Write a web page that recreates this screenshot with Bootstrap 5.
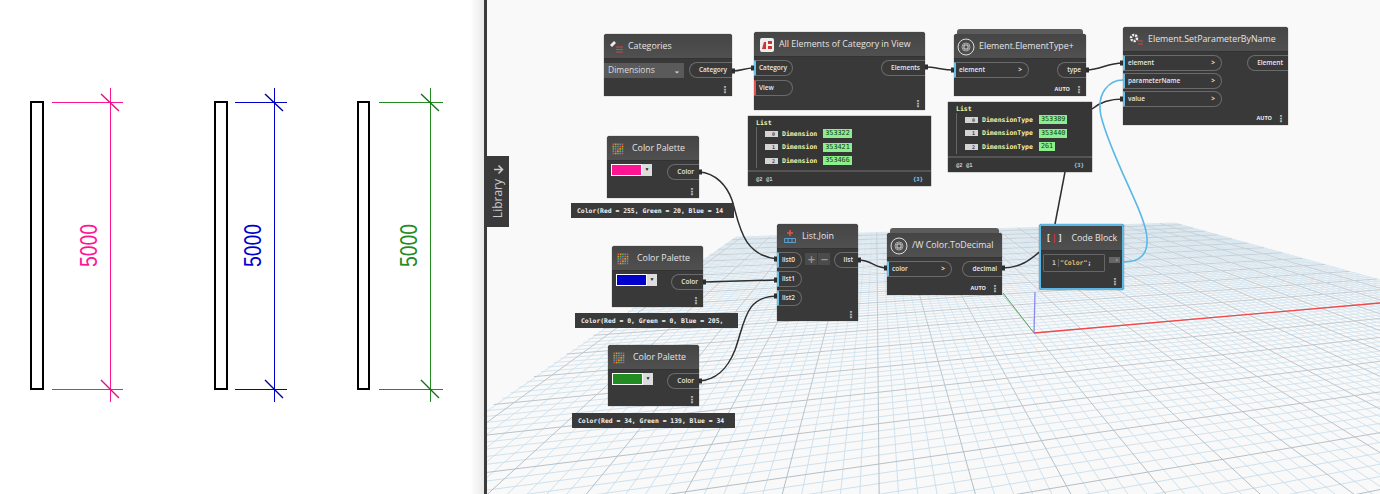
<!DOCTYPE html>
<html lang="en">
<head>
  <meta charset="UTF-8">
  <title>Dynamo graph - dimension colours</title>
  <link href="https://cdn.jsdelivr.net/npm/bootstrap@5.3.3/dist/css/bootstrap.min.css" rel="stylesheet" />
  <style>
    html, body { height: 494px; overflow: hidden; background: #fff; }
    .app-wrap { width: 1380px; height: 494px; }
    .revit-pane { width: 484px; background: linear-gradient(90deg, #fff 0, #fff 470px, #e9e9e9 484px); }
    .pane-split { width: 3px; background: #3b3b3b; }
    .graph-pane { width: 893px; background: #f9f9f9; overflow: hidden; }
    .layer-svg { position: absolute; left: 0; top: 0; width: 893px; height: 494px; }
    .dim-text { font-family: "Liberation Sans", sans-serif; font-size: 23px; }

    .lib-tab { position: absolute; left: 0; top: 156px; width: 22px; height: 71px; background: #3a3a3a; color: #c9c9c9; font: 12px "Open Sans", sans-serif; }
    .lib-label { writing-mode: vertical-rl; transform: rotate(180deg); line-height: 1; }

    .dyn-node { position: absolute; background: #393939; color: #e2e2e2; font-family: "Open Sans", sans-serif; border-radius: 3px 3px 0 0; box-shadow: 0 0 1px #222; }
    .dyn-head { height: 25px; background: linear-gradient(#454545, #505050); border-bottom: 1px solid #333; border-radius: 3px 3px 0 0; font-size: 8.85px; padding: 1px 0 0 5px; color: #e4e4e4; white-space: nowrap; }
    .head-tight { padding-left: 3px; }
    .dyn-body { padding-top: 3px; }
    .dyn-foot { position: absolute; right: 0; bottom: 0; height: 13px; padding-right: 3px; font-size: 5.5px; font-weight: 700; color: #eee; }
    .dots-v { font: 700 10px "DejaVu Sans", sans-serif; color: #bbb; width: 9px; text-align: center; line-height: 1; }
    .stacked::before { content: ""; position: absolute; left: 3px; right: 3px; top: -5px; height: 5px; background: #5c5c5c; border-radius: 3px 3px 0 0; }

    .port-in, .port-out { height: 16px; border: 1px solid #6b6b6b; font-size: 6.5px; font-weight: 600; color: #e8e8e8; white-space: nowrap; }
    .port-in { border-left: 2px solid #67bfe8; border-radius: 0 8px 8px 0; padding: 0 6px 0 3px; }
    .port-in.port-red { border-left-color: #e2544f; }
    .port-out { border-right: 0; border-radius: 8px 0 0 8px; padding: 0 5px 0 9px; }
    .chev { font-weight: 700; font-size: 6.5px; }
    .port-w-type { width: 75px; }
    .port-w-set { width: 99px; }
    .port-w-color { width: 65px; }
    .port-w-all { width: 39px; }
    .gap-set { gap: 2px; }
    .gap-join { gap: 3px; }
    .gap-tiny { gap: 1px; }
    .top-tiny { margin-top: 1px; }

    .cat-drop { width: 80px; height: 15px; margin-top: 1px; background: #5a5a5a; font-size: 8.5px; padding: 0 4px; color: #ddd; }
    .swatch { width: 31px; height: 12px; border: 1px solid #fff; }
    .swatch-pink { background: #ff1493; }
    .swatch-blue { background: #0000cd; }
    .swatch-green { background: #228b22; }
    .swatch-btn { width: 10px; height: 12px; background: #ddd; color: #222; font-size: 5px; }
    .plus-btn { width: 12px; height: 12px; background: #4b4b4b; color: #9a9a9a; font: 700 10px "DejaVu Sans", sans-serif; }

    .watch-box { position: absolute; background: #363636; color: #f2f2a8; font: 700 6.5px "DejaVu Sans Mono", monospace; box-shadow: 0 0 1px #222; }
    .watch-top { padding: 3px 0 0 8px; }
    .watch-tree { border-left: 1px solid #666; }
    .watch-row { height: 13.5px; }
    .watch-idx { width: 13px; height: 6px; background: #d4d4d4; color: #444; font-size: 5px; line-height: 6px; text-align: right; padding-right: 3px; }
    .watch-val { height: 9px; background: #8bf08b; color: #1c3a1c; line-height: 9px; margin-left: 6px; padding: 0 2px; font-weight: 400; font-size: 6.8px; }
    .watch-foot { height: 16px; border-top: 2px solid #555; color: #ccc; font-size: 5.5px; }
    .watch-count { color: #8ec9ee; }
    .tip-box { position: absolute; height: 15px; background: #3a3a3a; color: #f1f1f1; font: 700 6.4px "DejaVu Sans Mono", monospace; padding-left: 6px; white-space: nowrap; overflow: hidden; }

    .code-node { border: 2px solid #5ab8e6; border-radius: 3px; }
    .code-brack { font: 700 8px "DejaVu Sans Mono", monospace; letter-spacing: 1px; }
    .code-edit { width: 62px; height: 18px; border: 1px solid #666; font: 700 6.5px "DejaVu Sans Mono", monospace; margin: 3px 0 0 2px; border-radius: 1px; }
    .code-num { width: 15px; text-align: right; padding-right: 2px; border-right: 1px solid #666; color: #ccc; }
    .code-str { color: #e8b56c; padding-left: 1px; }
    .code-out { width: 11px; height: 6px; background: #666; color: #ddd; font-size: 5px; margin: 6px 1px 0 4px; line-height: 6px; text-align: right; padding-right: 2px; }

    #nodeCat { left: 117px; top: 34px; width: 128px; height: 62px; }
    #nodeAll { left: 267px; top: 32px; width: 171px; height: 78px; }
    #watchOne { left: 261px; top: 116px; width: 183px; height: 70px; }
    #nodeType { left: 467px; top: 34px; width: 132px; height: 62px; }
    #watchTwo { left: 461px; top: 102px; width: 144px; height: 70px; }
    #nodeSet { left: 636px; top: 27px; width: 165px; height: 98px; }
    #palOne { left: 120px; top: 136px; width: 92px; height: 62px; }
    #palTwo { left: 125px; top: 246px; width: 91px; height: 61px; }
    #palThree { left: 121px; top: 345px; width: 91px; height: 61px; }
    #tipOne { left: 84px; top: 203px; width: 163px; }
    #tipTwo { left: 88px; top: 313px; width: 163px; }
    #tipThree { left: 85px; top: 413px; width: 163px; }
    #nodeJoin { left: 290px; top: 224px; width: 81px; height: 97px; }
    #nodeDec { left: 400px; top: 233px; width: 115px; height: 62px; }
    #nodeCode { left: 552px; top: 224px; width: 85px; height: 66px; }
  </style>
</head>
<body>
  <div class="app-wrap d-flex">

    <!-- revit view -->
    <div class="revit-pane flex-shrink-0">
      <svg width="484" height="494" viewBox="0 0 484 494">
        <g fill="#fff" stroke="#000" stroke-width="2">
          <rect x="31" y="102" width="12" height="287"/>
          <rect x="215" y="102" width="12" height="287"/>
          <rect x="358" y="102" width="11" height="287"/>
        </g>
        <g stroke="#ff1493" fill="none">
          <path d="M52 102.500H123M52 389.500H123M110.500 88V402"/>
          <path d="M101 94L119 111M101 380L119 398" stroke="#e0107f" stroke-width="1.400"/>
        </g>
        <g stroke="#0000cd" fill="none">
          <path d="M235 102.500H287M235 389.500H287M274.500 88V402"/>
          <path d="M265 94L283 111M265 380L283 398" stroke="#0000a0" stroke-width="1.400"/>
        </g>
        <g stroke="#228b22" fill="none">
          <path d="M379 102.500H443M379 389.500H443M430.500 88V402"/>
          <path d="M421 94L439 111M421 380L439 398" stroke="#1a701a" stroke-width="1.400"/>
        </g>
        <text class="dim-text" fill="#ff1493" transform="translate(97 267) rotate(-90)" textLength="43" lengthAdjust="spacingAndGlyphs">5000</text>
        <text class="dim-text" fill="#0000cd" transform="translate(261 267) rotate(-90)" textLength="43" lengthAdjust="spacingAndGlyphs">5000</text>
        <text class="dim-text" fill="#228b22" transform="translate(417 267) rotate(-90)" textLength="43" lengthAdjust="spacingAndGlyphs">5000</text>
      </svg>
    </div>
    <div class="pane-split flex-shrink-0"></div>

    <!-- dynamo canvas -->
    <div class="graph-pane position-relative flex-shrink-0">
      <svg class="layer-svg" viewBox="487 0 893 494">
        <defs>
          <linearGradient id="gridFade" x1="0" y1="0" x2="0" y2="1">
            <stop offset="0" stop-color="#f9f9f9" stop-opacity="0.35"/>
            <stop offset="1" stop-color="#f9f9f9" stop-opacity="0"/>
          </linearGradient>
        </defs>
        <g id="gridLines" fill="none"></g>
        <rect x="487" y="215" width="893" height="279" fill="url(#gridFade)"/>
        <path d="M1034 333L1003 293" stroke="#5aa85a" stroke-width="1" fill="none"/>
        <path d="M1034 333L1380 303" stroke="#f2474b" stroke-width="1.300" fill="none"/>
        <path d="M1034 333L1035 292" stroke="#8a8af0" stroke-width="1.300" fill="none"/>
        <g fill="none" stroke="#2e2e2e" stroke-width="1.500">
          <path d="M732 71C742 71 744 68 754 68"/>
          <path d="M925 67C936 67 942 70 954 70"/>
          <path d="M1086 70C1102 70 1106 63 1123 63"/>
          <path d="M1092 109C1100 102 1110 99 1123 99"/>
          <path d="M1065 172L1055 224"/>
          <path d="M699 172C716 173 727 186 732 200C739 222 741 255 777 259"/>
          <path d="M703 282L777 280"/>
          <path d="M699 381C716 380 727 370 735 350C745 322 745 296 777 296"/>
          <path d="M858 260C872 260 874 268 887 268"/>
          <path d="M1002 268C1022 268 1032 258 1042 250"/>
        </g>
        <path d="M1124 262C1142 262 1148 252 1147 238C1146 214 1112 160 1101 116C1096 92 1110 80 1123 80" fill="none" stroke="#5ab8e6" stroke-width="1.600"/>
        <g id="portStubs" fill="#2e2e2e"></g>
      </svg>

      <div class="lib-tab d-flex flex-column align-items-center pt-2 gap-1">
        <svg width="11" height="11" viewBox="0 0 11 11"><path d="M1 5.500H9M5.500 1.500L9.500 5.500L5.500 9.500" fill="none" stroke="#c9c9c9" stroke-width="1.600"/></svg>
        <span class="lib-label">Library</span>
      </div>

      <div class="dyn-node" id="nodeCat">
        <div class="dyn-head d-flex align-items-center gap-1">
          <svg width="15" height="14" viewBox="0 0 15 14"><path d="M1 5L5 1L7 3L3 7Z" fill="#eee"/><path d="M7 7H14M7 9.500H14M7 12H14" stroke="#c94a4a"/></svg>
          Categories
        </div>
        <div class="dyn-body d-flex justify-content-between align-items-start">
          <div class="cat-drop d-flex align-items-center justify-content-between"><span>Dimensions</span><span class="chev">⌄</span></div>
          <div class="port-out d-flex align-items-center">Category</div>
        </div>
        <div class="dyn-foot d-flex align-items-center"><span class="dots-v">⋮</span></div>
      </div>

      <div class="dyn-node" id="nodeAll">
        <div class="dyn-head d-flex align-items-center gap-1">
          <svg width="16" height="16" viewBox="0 0 16 16"><rect x="1" y="1" width="14" height="14" rx="2" fill="#eee"/><path d="M3 12L5 5H7V12ZM9 4H13V7H9ZM9 9H13V12H9Z" fill="#c33"/></svg>
          All Elements of Category in View
        </div>
        <div class="dyn-body d-flex justify-content-between align-items-start">
          <div class="d-flex flex-column gap-1">
            <div class="port-in d-flex align-items-center port-w-all">Category</div>
            <div class="port-in port-red d-flex align-items-center port-w-all">View</div>
          </div>
          <div class="port-out d-flex align-items-center">Elements</div>
        </div>
        <div class="dyn-foot d-flex align-items-center"><span class="dots-v">⋮</span></div>
      </div>

      <div class="watch-box d-flex flex-column" id="watchOne">
        <div class="flex-grow-1 watch-top">
          <div>List</div>
          <div class="watch-tree ps-2">
            <div class="watch-row d-flex align-items-center"><span class="watch-idx">0</span><span class="ms-1">Dimension</span><span class="watch-val">353322</span></div>
            <div class="watch-row d-flex align-items-center"><span class="watch-idx">1</span><span class="ms-1">Dimension</span><span class="watch-val">353421</span></div>
            <div class="watch-row d-flex align-items-center"><span class="watch-idx">2</span><span class="ms-1">Dimension</span><span class="watch-val">353466</span></div>
          </div>
        </div>
        <div class="watch-foot d-flex align-items-center justify-content-between px-2"><span>@2 @1</span><span class="watch-count">{3}</span></div>
      </div>

      <div class="dyn-node stacked" id="nodeType">
        <div class="dyn-head head-tight d-flex align-items-center gap-1">
          <svg width="18" height="18" viewBox="0 0 18 18"><circle cx="9" cy="9" r="8" fill="none" stroke="#ddd"/><circle cx="9" cy="9" r="4" fill="none" stroke="#aaa"/><path d="M7 7H11V11H7Z" fill="none" stroke="#ddd"/></svg>
          Element.ElementType+
        </div>
        <div class="dyn-body d-flex justify-content-between align-items-start">
          <div class="port-in d-flex align-items-center justify-content-between port-w-type"><span>element</span><span class="chev">&gt;</span></div>
          <div class="port-out d-flex align-items-center">type</div>
        </div>
        <div class="dyn-foot d-flex align-items-center gap-1"><span>AUTO</span><span class="dots-v">⋮</span></div>
      </div>

      <div class="watch-box d-flex flex-column" id="watchTwo">
        <div class="flex-grow-1 watch-top">
          <div>List</div>
          <div class="watch-tree ps-2">
            <div class="watch-row d-flex align-items-center"><span class="watch-idx">0</span><span class="ms-1">DimensionType</span><span class="watch-val">353389</span></div>
            <div class="watch-row d-flex align-items-center"><span class="watch-idx">1</span><span class="ms-1">DimensionType</span><span class="watch-val">353440</span></div>
            <div class="watch-row d-flex align-items-center"><span class="watch-idx">2</span><span class="ms-1">DimensionType</span><span class="watch-val">261</span></div>
          </div>
        </div>
        <div class="watch-foot d-flex align-items-center justify-content-between px-2"><span>@2 @1</span><span class="watch-count">{3}</span></div>
      </div>

      <div class="dyn-node" id="nodeSet">
        <div class="dyn-head d-flex align-items-center gap-1">
          <svg width="16" height="16" viewBox="0 0 16 16"><circle cx="6" cy="6" r="3" fill="none" stroke="#eee" stroke-width="2.500" stroke-dasharray="2 1"/><path d="M10 9H15M10 12H15" stroke="#c94a4a"/></svg>
          Element.SetParameterByName
        </div>
        <div class="dyn-body d-flex justify-content-between align-items-start">
          <div class="d-flex flex-column gap-set">
            <div class="port-in d-flex align-items-center justify-content-between port-w-set"><span>element</span><span class="chev">&gt;</span></div>
            <div class="port-in d-flex align-items-center justify-content-between port-w-set"><span>parameterName</span><span class="chev">&gt;</span></div>
            <div class="port-in d-flex align-items-center justify-content-between port-w-set"><span>value</span><span class="chev">&gt;</span></div>
          </div>
          <div class="port-out d-flex align-items-center">Element</div>
        </div>
        <div class="dyn-foot d-flex align-items-center gap-1"><span>AUTO</span><span class="dots-v">⋮</span></div>
      </div>

      <div class="dyn-node" id="palOne">
        <div class="dyn-head d-flex align-items-center gap-2"><svg class="pal-icon" width="12" height="12" viewBox="0 0 12 12"></svg>Color Palette</div>
        <div class="dyn-body d-flex justify-content-between align-items-start">
          <div class="d-flex ms-1"><div class="swatch swatch-pink"></div><div class="swatch-btn d-flex align-items-center justify-content-center">▼</div></div>
          <div class="port-out d-flex align-items-center">Color</div>
        </div>
        <div class="dyn-foot d-flex align-items-center"><span class="dots-v">⋮</span></div>
      </div>
      <div class="tip-box d-flex align-items-center" id="tipOne">Color(Red = 255, Green = 20, Blue = 14</div>

      <div class="dyn-node" id="palTwo">
        <div class="dyn-head d-flex align-items-center gap-2"><svg class="pal-icon" width="12" height="12" viewBox="0 0 12 12"></svg>Color Palette</div>
        <div class="dyn-body d-flex justify-content-between align-items-start">
          <div class="d-flex ms-1"><div class="swatch swatch-blue"></div><div class="swatch-btn d-flex align-items-center justify-content-center">▼</div></div>
          <div class="port-out d-flex align-items-center">Color</div>
        </div>
        <div class="dyn-foot d-flex align-items-center"><span class="dots-v">⋮</span></div>
      </div>
      <div class="tip-box d-flex align-items-center" id="tipTwo">Color(Red = 0, Green = 0, Blue = 205,</div>

      <div class="dyn-node" id="palThree">
        <div class="dyn-head d-flex align-items-center gap-2"><svg class="pal-icon" width="12" height="12" viewBox="0 0 12 12"></svg>Color Palette</div>
        <div class="dyn-body d-flex justify-content-between align-items-start">
          <div class="d-flex ms-1"><div class="swatch swatch-green"></div><div class="swatch-btn d-flex align-items-center justify-content-center">▼</div></div>
          <div class="port-out d-flex align-items-center">Color</div>
        </div>
        <div class="dyn-foot d-flex align-items-center"><span class="dots-v">⋮</span></div>
      </div>
      <div class="tip-box d-flex align-items-center" id="tipThree">Color(Red = 34, Green = 139, Blue = 34</div>

      <div class="dyn-node" id="nodeJoin">
        <div class="dyn-head d-flex align-items-center gap-1">
          <svg width="16" height="16" viewBox="0 0 16 16"><path d="M8 1V7M5 4H11" stroke="#e2544f" stroke-width="1.500"/><path d="M2.500 9.500H13.500V13.500H2.500ZM6 9.500V13.500M10 9.500V13.500" fill="none" stroke="#5a9fd0"/></svg>
          List.Join
        </div>
        <div class="dyn-body d-flex justify-content-between align-items-start">
          <div class="d-flex flex-column gap-join">
            <div class="port-in d-flex align-items-center">list0</div>
            <div class="port-in d-flex align-items-center">list1</div>
            <div class="port-in d-flex align-items-center">list2</div>
          </div>
          <div class="d-flex gap-tiny top-tiny">
            <div class="plus-btn d-flex align-items-center justify-content-center">+</div>
            <div class="plus-btn d-flex align-items-center justify-content-center">−</div>
          </div>
          <div class="port-out d-flex align-items-center">list</div>
        </div>
        <div class="dyn-foot d-flex align-items-center"><span class="dots-v">⋮</span></div>
      </div>

      <div class="dyn-node stacked" id="nodeDec">
        <div class="dyn-head head-tight d-flex align-items-center gap-1">
          <svg width="18" height="18" viewBox="0 0 18 18"><circle cx="9" cy="9" r="8" fill="none" stroke="#ddd"/><circle cx="9" cy="9" r="4" fill="none" stroke="#aaa"/><path d="M7 7H11V11H7Z" fill="none" stroke="#ddd"/></svg>
          /W Color.ToDecimal
        </div>
        <div class="dyn-body d-flex justify-content-between align-items-start">
          <div class="port-in d-flex align-items-center justify-content-between port-w-color"><span>color</span><span class="chev">&gt;</span></div>
          <div class="port-out d-flex align-items-center">decimal</div>
        </div>
        <div class="dyn-foot d-flex align-items-center gap-1"><span>AUTO</span><span class="dots-v">⋮</span></div>
      </div>

      <div class="dyn-node code-node" id="nodeCode">
        <div class="dyn-head d-flex align-items-center gap-2">
          <span class="code-brack">[<span class="text-danger">|</span>]</span>Code Block
        </div>
        <div class="d-flex align-items-start">
          <div class="code-edit d-flex align-items-center"><span class="code-num">1</span><span class="code-str">"Color"</span><span>;</span></div>
          <div class="code-out">&gt;</div>
        </div>
        <div class="dyn-foot d-flex align-items-center"><span class="dots-v">⋮</span></div>
      </div>
    </div>
  </div>

  <script>
    // perspective floor grid, built from two vanishing points
    const O = [1034, 333], V1 = [2950, 166], V2 = [876, 140], P = [1175, 223], L = [490, 407];
    const UNITS_U = 54, UNITS_V = 68, MAJOR = 5;

    function meet(a, b, c, d) {
      const d1 = [b[0] - a[0], b[1] - a[1]], d2 = [d[0] - c[0], d[1] - c[1]];
      const t = ((c[0] - a[0]) * d2[1] - (c[1] - a[1]) * d2[0]) / (d1[0] * d2[1] - d1[1] * d2[0]);
      return [a[0] + d1[0] * t, a[1] + d1[1] * t];
    }
    function along(V, k, n) {
      const w = 1 + k * n;
      return [(O[0] + k * n * V[0]) / w, (O[1] + k * n * V[1]) / w];
    }
    function scaleFor(point, V, units) {
      const s = (point[0] - O[0]) / (V[0] - O[0]);
      return s / (1 - s) / units;
    }

    const farHit = meet(O, V2, P, V1);
    const rightHit = meet(O, V1, P, V2);
    const leftHit = meet(O, V1, L, V2);
    const kV = scaleFor(farHit, V2, UNITS_V);
    const kU = scaleFor(rightHit, V1, UNITS_U);
    const uMin = Math.ceil(((leftHit[0] - O[0]) / (V1[0] - O[0])) / (1 - (leftHit[0] - O[0]) / (V1[0] - O[0])) / kU);

    let out = '';
    function line(a, b, major) {
      out += '<path d="M' + a[0].toFixed(1) + ' ' + a[1].toFixed(1) + 'L' + b[0].toFixed(1) + ' ' + b[1].toFixed(1) +
        '" stroke="' + (major ? '#b2bec7' : '#c8deeb') + '" stroke-width="' + (major ? 1 : 0.9) + '"/>';
    }
    // minor lines first so the major ones sit on top
    function drawGrid(wantMajor) {
      for (let v = UNITS_V; 1 + kV * v > 0.12; v--) {
        if ((v % MAJOR === 0) !== wantMajor) continue;
        const q = along(V2, kV, v);
        if (q[1] > 900) break;
        line(meet(q, V1, L, V2), meet(q, V1, P, V2), wantMajor);
      }
      for (let u = uMin; u <= UNITS_U; u++) {
        if ((u % MAJOR === 0) !== wantMajor) continue;
        const s = along(V1, kU, u);
        const top = meet(s, V2, P, V1);
        const t = (900 - V2[1]) / (s[1] - V2[1]);
        line(top, [V2[0] + (s[0] - V2[0]) * t, 900], wantMajor);
      }
    }
    drawGrid(false);
    drawGrid(true);
    document.getElementById('gridLines').innerHTML = out;

    // small connector stubs at the node edges
    const stubs = [[732,71],[751,68],[925,67],[951,70],[1086,70],[1120,63],[1120,99],[699,172],[774,259],[703,282],[774,280],[699,381],[774,296],[858,260],[884,268],[1002,268]];
    document.getElementById('portStubs').innerHTML = stubs.map(p => '<rect x="' + p[0] + '" y="' + (p[1] - 2.5) + '" width="3" height="5"/>').join('');

    // colour palette icon
    const hues = ['#d9534f', '#e0a030', '#6fae45', '#4a90c8'];
    let dots = '';
    for (let r = 0; r < 5; r++) for (let c = 0; c < 5; c++) {
      dots += '<rect x="' + (c * 2.3 + 0.5) + '" y="' + (r * 2.3 + 0.5) + '" width="1.6" height="1.6" fill="' + hues[(r + c) % 4] + '"/>';
    }
    document.querySelectorAll('.pal-icon').forEach(el => { el.innerHTML = dots; });
  </script>
  <script src="https://cdn.jsdelivr.net/npm/bootstrap@5.3.3/dist/js/bootstrap.bundle.min.js"></script>
</body>
</html>
